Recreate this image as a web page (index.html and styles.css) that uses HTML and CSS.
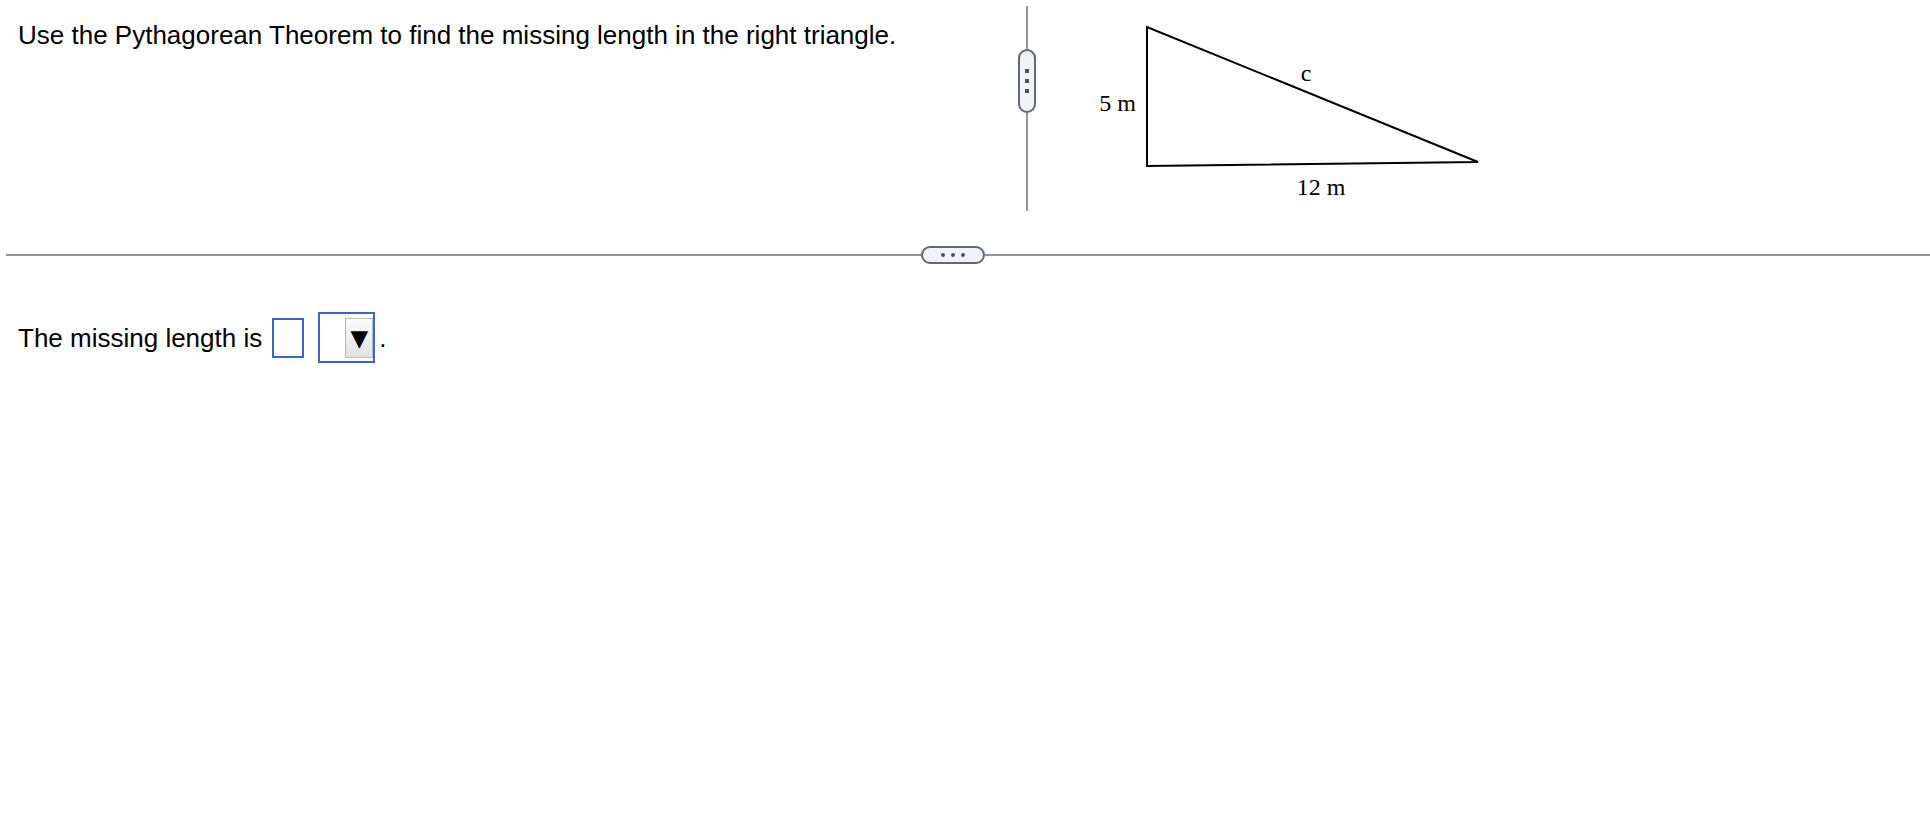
FILE: index.html
```html
<!DOCTYPE html>
<html>
<head>
<meta charset="utf-8">
<link rel="stylesheet" href="styles.css">
</head>
<body>
<div class="top">
  <div class="question">Use the Pythagorean Theorem to find the missing length in the right triangle.</div>
  <div class="vsplit">
    <div class="vline vline-a"></div>
    <div class="vpill"><span class="sq"></span><span class="sq"></span><span class="sq"></span></div>
    <div class="vline vline-b"></div>
  </div>
  <div class="figure">
    <svg class="tri" width="460" height="212" viewBox="0 0 460 212">
      <polygon points="111,27 111,166 442,162" fill="none" stroke="#000" stroke-width="2" stroke-linejoin="miter"/>
      <text x="100" y="111" text-anchor="end" class="lbl">5 m</text>
      <text x="270" y="81" text-anchor="middle" class="lbl">c</text>
      <text x="285" y="195" text-anchor="middle" class="lbl">12 m</text>
    </svg>
  </div>
</div>
<div class="hsplit">
  <div class="hline hline-a"></div>
  <div class="hpill"><span class="dot"></span><span class="dot"></span><span class="dot"></span></div>
  <div class="hline hline-b"></div>
</div>
<div class="answer">
  <span class="atext">The missing length is</span>
  <span class="inbox"></span>
  <span class="dropdown"><span class="ddbtn">&#9660;</span></span>
  <span class="period">.</span>
</div>
</body>
</html>
```

FILE: styles.css
```css
html, body {
  margin: 0;
  padding: 0;
  background: #fff;
}
body {
  font-family: "Liberation Sans", Arial, sans-serif;
  color: #000;
  width: 1930px;
  height: 822px;
  overflow: hidden;
}
.top {
  display: flex;
  height: 210px;
}
.question {
  width: 1000px;
  padding-left: 18px;
  padding-top: 20px;
  font-size: 26px;
  line-height: 30px;
  box-sizing: border-box;
  flex: none;
}
.vsplit {
  width: 18px;
  margin-left: 18px;
  margin-top: 6px;
  height: 205px;
  display: flex;
  flex-direction: column;
  align-items: center;
  flex: none;
}
.vline {
  width: 2px;
  background: #8c95a3;
}
.vline-a { height: 43px; }
.vline-b { flex: 1; }
.vpill {
  width: 18px;
  height: 64px;
  box-sizing: border-box;
  border: 2px solid #5d6776;
  border-radius: 9px;
  background: #f2f3f6;
  display: flex;
  flex-direction: column;
  align-items: center;
  justify-content: center;
  gap: 6px;
}
.sq {
  width: 4px;
  height: 4px;
  background: #4a5260;
}
.figure {
  flex: none;
}
.tri {
  display: block;
}
.lbl {
  font-family: "Liberation Serif", "Times New Roman", serif;
  font-size: 24px;
  fill: #000;
}
.hsplit {
  display: flex;
  align-items: center;
  margin-top: 36px;
  margin-left: 6px;
  height: 18px;
}
.hline {
  height: 2px;
  background: #8c95a3;
}
.hline-a { width: 915px; }
.hline-b { flex: 1; }
.hpill {
  width: 64px;
  height: 18px;
  box-sizing: border-box;
  border: 2px solid #5d6776;
  border-radius: 9px;
  background: #f2f3f6;
  display: flex;
  align-items: center;
  justify-content: center;
  gap: 6px;
  flex: none;
}
.dot {
  width: 4px;
  height: 4px;
  border-radius: 50%;
  background: #4a5260;
}
.answer {
  display: flex;
  align-items: center;
  margin-top: 48px;
  padding-left: 18px;
  height: 51px;
  font-size: 26px;
  line-height: 30px;
}
.inbox {
  width: 32px;
  height: 40px;
  box-sizing: border-box;
  border: 2px solid #3b66c6;
  margin-left: 10px;
  background: #fff;
}
.dropdown {
  width: 57px;
  height: 51px;
  box-sizing: border-box;
  border: 2px solid #3b66c6;
  margin-left: 14px;
  display: flex;
  justify-content: flex-end;
  padding-top: 4px;
  background: #fff;
}
.ddbtn {
  width: 28px;
  height: 40px;
  box-sizing: border-box;
  border: 1px solid #b9b9b9;
  background: linear-gradient(#fbfbfb, #e2e2e2);
  font-size: 23px;
  line-height: 38px;
  text-align: center;
  color: #000;
  font-family: "DejaVu Sans", sans-serif;
}
.period {
  margin-left: 4px;
}
```
